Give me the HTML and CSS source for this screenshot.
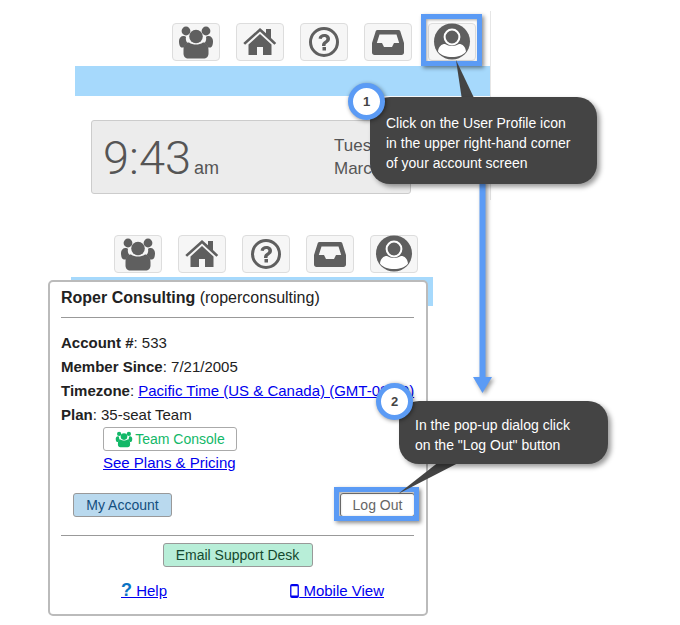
FILE: index.html
```html
<!DOCTYPE html>
<html lang="en">
<head>
    <meta charset="UTF-8">
    <meta name="viewport" content="width=device-width, initial-scale=1.0">
    <title>Log Out</title>
    <link rel="stylesheet" href="styles.css">
</head>
<body>
    <svg class="defs" width="0" height="0">
        <symbol id="i-users" viewBox="0 0 48 37">
            <circle cx="14" cy="8" r="4.400"/>
            <circle cx="34" cy="8" r="4.400"/>
            <path d="M7 18c0-3 2-5 4.500-5 1 0 2 .4 2.500 1-.5 2 0 4.500 1.500 6-1.500 1-3 2.500-3.500 4.500h-2C8 24.500 7 22 7 18zM41 18c0-3-2-5-4.500-5-1 0-2 .4-2.500 1 .5 2 0 4.500-1.500 6 1.500 1 3 2.500 3.500 4.500h2C40 24.500 41 22 41 18z"/>
            <circle cx="24" cy="13.500" r="6.800"/>
            <path d="M11.500 27c0-5 2.500-7.500 5.500-7.500 2 1.500 4.500 2 7 2s5-.5 7-2c3 0 5.500 2.500 5.500 7.500v3.500c0 3-2 5-5 5H16.500c-3 0-5-2-5-5z"/>
        </symbol>
        <symbol id="i-home" viewBox="0 0 48 37">
            <path d="M30 6h5v9l5.200 5-1.800 1.800L24 8.500 9.100 21.800 7.300 20 24 5l6 5.300z"/>
            <path d="M24 11l11.500 10.500V32h-8.500v-8h-6v8h-8.500V21.500z"/>
        </symbol>
        <symbol id="i-help" viewBox="0 0 48 37">
            <circle cx="24" cy="19" r="13.500" fill="none" stroke="currentColor" stroke-width="3"/>
            <path d="M18.500 15.500c.5-3 2.800-4.500 5.700-4.500 3.300 0 5.800 2 5.800 4.800 0 2-1 3.100-2.700 4.200-1.500 1-1.800 1.600-1.800 3h-3.500c0-2.500.6-3.700 2.600-5 1.200-.8 1.800-1.300 1.800-2.200 0-1-1-1.700-2.200-1.700-1.400 0-2.200.8-2.500 2z"/>
            <rect x="22.500" y="24" width="3.500" height="3.500"/>
        </symbol>
        <symbol id="i-inbox" viewBox="0 0 48 37">
            <path d="M13.500 7h21c.8 0 1.400.4 1.700 1.100L40 20v9.500c0 1.400-1.100 2.500-2.500 2.500h-27C9.100 32 8 30.900 8 29.500V20l3.800-11.900c.3-.7.900-1.100 1.700-1.100zM15.500 11.500L12.800 20H18l2 4h8l2-4h5.200l-2.700-8.500z" fill-rule="evenodd"/>
        </symbol>
        <symbol id="i-user" viewBox="0 0 48 37">
            <circle cx="24" cy="18.500" r="18"/>
            <circle cx="24" cy="14" r="7.400" fill="none" stroke="#fff" stroke-width="2"/>
            <path d="M10 28.500c.5-5 3.500-7.500 7-7.500 2 1.300 4.500 2 7 2s5-.7 7-2c3.500 0 6.500 2.500 7 7.500-3 4-8 5.500-14 5.500s-11-1.500-14-5.500z" fill="#fff"/>
        </symbol>
    </svg>

    <div class="stage">
        <section class="shot shot-top">
            <div class="toolbar">
                <span class="tool"><svg><use href="#i-users"/></svg></span>
                <span class="tool"><svg><use href="#i-home"/></svg></span>
                <span class="tool"><svg><use href="#i-help"/></svg></span>
                <span class="tool"><svg><use href="#i-inbox"/></svg></span>
                <span class="tool"><svg><use href="#i-user"/></svg></span>
            </div>
            <div class="bar"></div>
            <div class="clock">
                <div class="time">9:43<span class="ampm">am</span></div>
                <div class="date">Tuesday,<br>March 3</div>
            </div>
        </section>

        <section class="shot shot-bottom">
            <div class="toolbar">
                <span class="tool"><svg><use href="#i-users"/></svg></span>
                <span class="tool"><svg><use href="#i-home"/></svg></span>
                <span class="tool"><svg><use href="#i-help"/></svg></span>
                <span class="tool"><svg><use href="#i-inbox"/></svg></span>
                <span class="tool"><svg><use href="#i-user"/></svg></span>
            </div>
            <div class="bar"></div>
            <div class="dialog">
                <div class="title"><b>Roper Consulting</b> (roperconsulting)</div>
                <hr>
                <div class="rows">
                    <div class="row"><b>Account #</b>: 533</div>
                    <div class="row"><b>Member Since</b>: 7/21/2005</div>
                    <div class="row"><b>Timezone</b>: <a href="#">Pacific Time (US &amp; Canada) (GMT-08:00)</a></div>
                    <div class="row"><b>Plan</b>: 35-seat Team</div>
                </div>
                <div class="plan">
                    <span class="btn btn-team"><svg class="team-icon"><use href="#i-users"/></svg>Team Console</span>
                    <a class="plan-link" href="#">See Plans &amp; Pricing</a>
                </div>
                <div class="actions">
                    <span class="btn btn-account">My Account</span>
                    <span class="btn btn-logout">Log Out</span>
                </div>
                <hr>
                <div class="support"><span class="btn btn-support">Email Support Desk</span></div>
                <div class="links">
                    <a href="#"><span class="q">?</span> Help</a>
                    <a href="#"><svg class="phone" viewBox="0 0 10 16"><path d="M2 0h6a2 2 0 0 1 2 2v12a2 2 0 0 1-2 2H2a2 2 0 0 1-2-2V2a2 2 0 0 1 2-2zm-.5 2.500v10.500h7V2.500z" fill-rule="evenodd"/></svg> Mobile View</a>
                </div>
            </div>
        </section>

        <div class="frame frame-user"></div>
        <div class="frame frame-logout"></div>

        <svg class="marks" viewBox="0 0 680 625">
            <path class="arrow" d="M479.500 180h6v197h6.500l-9.500 16-9.500-16h6.500z"/>
            <path class="tail" d="M456 60l19 40h-13z"/>
            <path class="tail" d="M398 494l42-33h22z"/>
        </svg>

        <div class="callout callout-one">Click on the User Profile icon<br>in the upper right-hand corner<br>of your account screen</div>
        <div class="callout callout-two">In the pop-up dialog click<br>on the "Log Out" button</div>
        <div class="step step-one">1</div>
        <div class="step step-two">2</div>
    </div>
</body>
</html>
```

FILE: styles.css
```css
body {
    margin: 0;
    background: #fff;
    font-family: 'Liberation Sans', Arial, sans-serif;
    color: #222;
}
.defs {
    position: absolute;
}
.stage {
    position: relative;
    width: 680px;
    height: 625px;
    overflow: hidden;
}
.shot-top {
    box-sizing: border-box;
    width: 416px;
    height: 189px;
    margin: 11px 0 0 75px;
    padding-top: 12px;
    border-right: 1px solid #e6e6e6;
}
.shot-bottom {
    width: 362px;
    margin: 35px 0 0 71px;
}
.toolbar {
    display: flex;
    justify-content: flex-end;
    gap: 16px;
    padding-right: 14px;
}
.shot-bottom .toolbar {
    padding-right: 15px;
}
.tool {
    box-sizing: border-box;
    width: 48px;
    height: 38px;
    background: #f6f6f6;
    border: 1px solid #ddd;
    border-radius: 4px;
    color: #5f5f5f;
}
.tool svg {
    display: block;
    width: 48px;
    height: 37px;
    margin: -1px;
    fill: currentColor;
    overflow: visible;
}
.bar {
    height: 30px;
    margin-top: 5px;
    background: #a6d9fc;
}
.shot-bottom .bar {
    height: 29px;
    margin-top: 4px;
}
.clock {
    box-sizing: border-box;
    display: flex;
    justify-content: space-between;
    align-items: center;
    width: 320px;
    height: 74px;
    margin: 24px 0 0 16px;
    padding-left: 11px;
    background: #ececec;
    border: 1px solid #ccc;
    border-radius: 3px;
    color: #555;
}
.time {
    font-family: Roboto, sans-serif;
    font-weight: 300;
    font-size: 47px;
}
.ampm {
    margin-left: 3px;
    font-family: 'Liberation Sans', sans-serif;
    font-weight: 400;
    font-size: 18px;
}
.date {
    width: 76px;
    font-size: 17px;
    line-height: 23px;
}
.dialog {
    position: relative;
    box-sizing: border-box;
    width: 380px;
    height: 336px;
    margin: -26px 0 0 -23px;
    padding: 0 12px 0 11px;
    background: #fff;
    border: 2px solid #bbb;
    border-radius: 5px;
    font-size: 15px;
}
.dialog hr {
    margin: 0;
    border: 0;
    border-top: 1px solid #999;
}
.title {
    padding: 7px 0 10px;
    font-size: 16px;
    line-height: 18px;
}
.rows {
    padding-top: 13px;
}
.row {
    height: 24px;
    line-height: 24px;
    white-space: nowrap;
}
.dialog a {
    color: #00e;
}
.plan {
    display: flex;
    flex-direction: column;
    align-items: flex-start;
    gap: 1px;
    margin: 0 0 0 42px;
}
.btn {
    box-sizing: border-box;
    display: inline-flex;
    align-items: center;
    justify-content: center;
    height: 24px;
    border: 1px solid #999;
    border-radius: 3px;
    font-size: 14px;
}
.btn-team {
    width: 134px;
    border-color: #aaa;
    color: #12b868;
}
.team-icon {
    width: 24px;
    height: 18px;
    margin: 0 -1px 0 -3px;
    fill: currentColor;
}
.plan-link {
    line-height: 22px;
}
.actions {
    display: flex;
    justify-content: space-between;
    margin: 19px -1px 18px 12px;
}
.btn-account {
    width: 99px;
    background: #b9d9ee;
    color: #134e7e;
}
.btn-logout {
    width: 75px;
    background: #fff;
    border-color: #777;
    color: #666;
}
.support {
    display: flex;
    justify-content: center;
    margin-top: 7px;
}
.btn-support {
    width: 150px;
    background: #b8eed8;
    color: #14492f;
}
.links {
    display: flex;
    justify-content: space-between;
    padding: 15px 30px 0 60px;
    line-height: 18px;
}
.q {
    color: #0a74c4;
    font-size: 18px;
    font-weight: bold;
    line-height: 14px;
}
.phone {
    width: 9px;
    height: 14px;
    vertical-align: -2px;
    fill: #00e;
}
.frame {
    position: absolute;
    box-sizing: border-box;
    border: 5px solid #5b9bf5;
    box-shadow: 2px 2px 4px rgba(0, 0, 0, 0.45), inset 1px 1px 3px rgba(0, 0, 0, 0.35);
}
.frame-user {
    left: 421px;
    top: 14px;
    width: 61px;
    height: 52px;
}
.frame-logout {
    left: 334px;
    top: 487px;
    width: 85px;
    height: 34px;
}
.marks {
    position: absolute;
    top: 0;
    left: 0;
    width: 680px;
    height: 625px;
}
.arrow {
    fill: #5b9bf5;
    filter: drop-shadow(2px 2px 2px rgba(0, 0, 0, 0.4));
}
.tail {
    fill: #444;
}
.callout {
    position: absolute;
    box-sizing: border-box;
    background: #444;
    border-radius: 20px;
    box-shadow: 3px 3px 5px rgba(0, 0, 0, 0.4);
    color: #fff;
    font-size: 14px;
    line-height: 20px;
}
.callout-one {
    left: 370px;
    top: 97px;
    width: 227px;
    height: 87px;
    padding: 16px 0 0 16px;
}
.callout-two {
    left: 399px;
    top: 401px;
    width: 209px;
    height: 63px;
    padding: 14px 0 0 16px;
}
.step {
    position: absolute;
    box-sizing: border-box;
    width: 37px;
    height: 37px;
    background: #fff;
    border: 5px solid #5b9bf5;
    border-radius: 50%;
    box-shadow: 1px 1px 4px rgba(0, 0, 0, 0.45);
    font-size: 13px;
    font-weight: bold;
    line-height: 27px;
    text-align: center;
    color: #444;
}
.step-one {
    left: 348px;
    top: 83px;
}
.step-two {
    left: 376px;
    top: 383px;
}
```
